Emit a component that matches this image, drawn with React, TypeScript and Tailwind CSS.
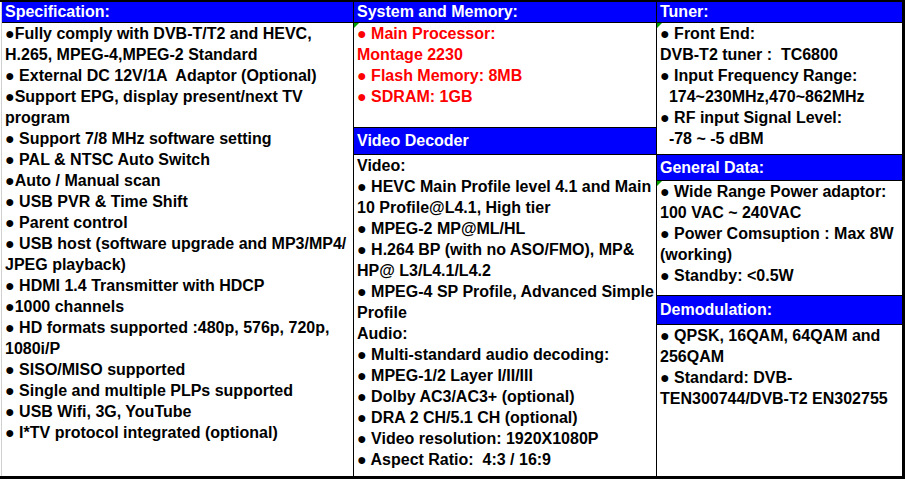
import React from "react";

const font = { fontFamily: '"Liberation Sans", Arial, sans-serif' };

function Header({ title, h }: { title: string; h: string }) {
  return (
    <div className={`${h} bg-[#0000ff] text-white font-bold text-[16px] leading-none flex items-center pl-[3px] border-b border-black whitespace-pre`}>
      {title}
    </div>
  );
}

function Lines({ lines, red }: { lines: string[]; red?: boolean }) {
  return (
    <div className={`${red ? "text-[#ff0000]" : "text-black"} font-bold text-[16px] leading-[21px] pl-[3px]`}>
      {lines.map((l, i) => (
        <div key={i} className="whitespace-pre h-[21px]">
          {l}
        </div>
      ))}
    </div>
  );
}

function Tri() {
  return (
    <svg className="absolute left-0 top-0" width="5" height="5" viewBox="0 0 5 5">
      <polygon points="0,0 5,0 0,5" fill="#00a000" />
    </svg>
  );
}

const col1 = [
  "●Fully comply with DVB-T/T2 and HEVC,",
  "H.265, MPEG-4,MPEG-2 Standard",
  "● External DC 12V/1A  Adaptor (Optional)",
  "●Support EPG, display present/next TV",
  "program",
  "● Support 7/8 MHz software setting",
  "● PAL & NTSC Auto Switch",
  "●Auto / Manual scan",
  "● USB PVR & Time Shift",
  "● Parent control",
  "● USB host (software upgrade and MP3/MP4/",
  "JPEG playback)",
  "● HDMI 1.4 Transmitter with HDCP",
  "●1000 channels",
  "● HD formats supported :480p, 576p, 720p,",
  "1080i/P",
  "● SISO/MISO supported",
  "● Single and multiple PLPs supported",
  "● USB Wifi, 3G, YouTube",
  "● I*TV protocol integrated (optional)",
];

const sys = ["● Main Processor:", "Montage 2230", "● Flash Memory: 8MB", "● SDRAM: 1GB"];

const video = [
  "Video:",
  "● HEVC Main Profile level 4.1 and Main",
  "10 Profile@L4.1, High tier",
  "● MPEG-2 MP@ML/HL",
  "● H.264 BP (with no ASO/FMO), MP&",
  "HP@ L3/L4.1/L4.2",
  "● MPEG-4 SP Profile, Advanced Simple",
  "Profile",
  "Audio:",
  "● Multi-standard audio decoding:",
  "● MPEG-1/2 Layer I/II/III",
  "● Dolby AC3/AC3+ (optional)",
  "● DRA 2 CH/5.1 CH (optional)",
  "● Video resolution: 1920X1080P",
  "● Aspect Ratio:  4:3 / 16:9",
];

const tuner = [
  "● Front End:",
  "DVB-T2 tuner :  TC6800",
  "● Input Frequency Range:",
  "  174~230MHz,470~862MHz",
  "● RF input Signal Level:",
  "  -78 ~ -5 dBM",
];

const general = [
  "● Wide Range Power adaptor:",
  "100 VAC ~ 240VAC",
  "● Power Comsuption : Max 8W",
  "(working)",
  "● Standby: <0.5W",
];

const demod = ["● QPSK, 16QAM, 64QAM and", "256QAM", "● Standard: DVB-", "TEN300744/DVB-T2 EN302755"];

export default function App() {
  return (
    <div style={font} className="w-[905px] h-[480px] bg-white overflow-hidden">
      <div className="h-[479px] border-t-2 border-b-[3px] border-black flex pl-[1px]">
        <div className="w-[353px] border-l border-[#d0d0d0] border-r border-r-black flex flex-col">
          <Header title="Specification:" h="h-[21px]" />
          <Lines lines={col1} />
        </div>
        <div className="w-[303px] border-r border-black flex flex-col">
          <Header title="System and Memory:" h="h-[21px]" />
          <div className="relative h-[105px] border-b border-black">
            <Tri />
            <Lines lines={sys} red />
          </div>
          <Header title="Video Decoder" h="h-[27px]" />
          <Lines lines={video} />
        </div>
        <div className="flex-1 border-r-[3px] border-black flex flex-col">
          <Header title="Tuner:" h="h-[21px]" />
          <div className="relative h-[132px] border-b border-black">
            <Tri />
            <Lines lines={tuner} />
          </div>
          <Header title="General Data:" h="h-[26px]" />
          <div className="relative h-[115px] border-b border-black">
            <Tri />
            <Lines lines={general} />
          </div>
          <Header title="Demodulation:" h="h-[29px]" />
          <Lines lines={demod} />
        </div>
      </div>
    </div>
  );
}
